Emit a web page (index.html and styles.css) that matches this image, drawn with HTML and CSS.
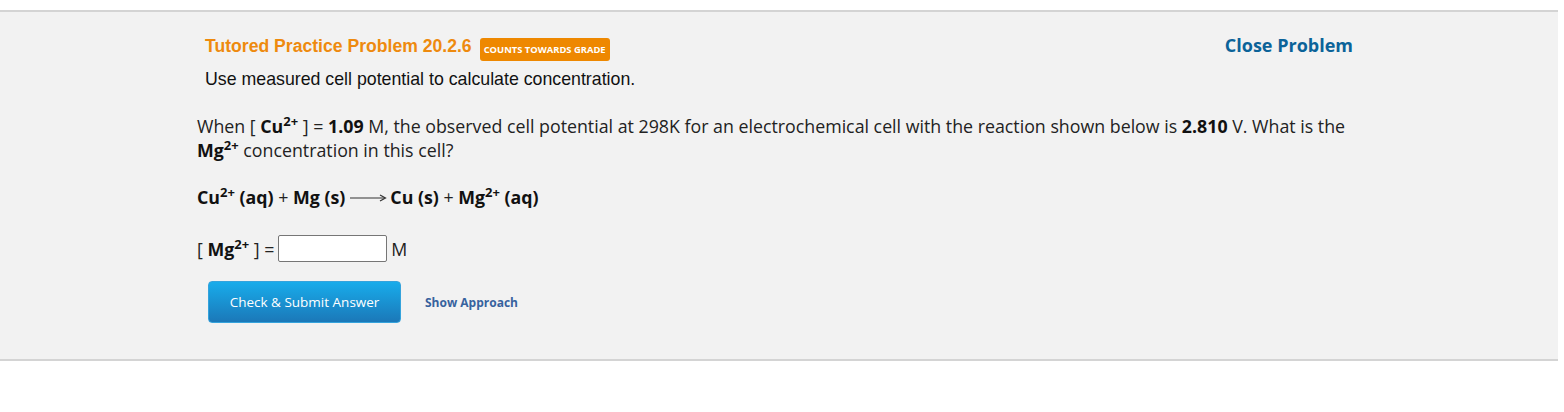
FILE: index.html
```html
<!DOCTYPE html>
<html>
<head>
<meta charset="utf-8">
<link rel="stylesheet" href="styles.css">
</head>
<body>
<div class="panel">
  <div class="header">
    <div class="title-wrap">
      <span class="title">Tutored Practice Problem 20.2.6</span>
      <span class="badge">COUNTS TOWARDS GRADE</span>
    </div>
    <a class="close">Close Problem</a>
  </div>
  <div class="subtitle">Use measured cell potential to calculate concentration.</div>
  <div class="question">
    <p class="prompt">When [ <b>Cu<sup>2+</sup></b> ] = <b>1.09</b> M, the observed cell potential at 298K for an electrochemical cell with the reaction shown below is <b>2.810</b> V. What is the <b>Mg<sup>2+</sup></b> concentration in this cell?</p>
    <p class="equation"><b>Cu<sup>2+</sup> (aq)</b> + <b>Mg (s)</b><svg class="arrow" width="38" height="10" viewBox="0 0 38 10"><line x1="1" y1="5" x2="36" y2="5" stroke="#333" stroke-width="1.2"/><path d="M31 2 L36.5 5 L31 8" fill="none" stroke="#333" stroke-width="1.2"/></svg><b>Cu (s)</b> + <b>Mg<sup>2+</sup> (aq)</b></p>
    <div class="answer-row">
      <span>[ <b>Mg<sup>2+</sup></b> ] =</span>
      <input class="answer" type="text">
      <span>M</span>
    </div>
    <div class="actions">
      <button class="submit">Check &amp; Submit Answer</button>
      <a class="approach">Show Approach</a>
    </div>
  </div>
</div>
</body>
</html>
```
FILE: styles.css
```css
html, body {
  margin: 0;
  padding: 0;
  background: #ffffff;
}
body {
  padding-top: 10px;
}
.panel {
  width: 1558px;
  height: 347px;
  box-sizing: content-box;
  background: #f2f2f2;
  border-top: 2px solid #d4d4d4;
  border-bottom: 2px solid #d4d4d4;
}
.header {
  display: flex;
  justify-content: space-between;
  align-items: flex-end;
  padding: 22px 205px 0 205px;
}
.title-wrap {
  display: flex;
  align-items: center;
  gap: 8px;
}
.title {
  font-family: "Liberation Sans", Arial, sans-serif;
  font-weight: bold;
  font-size: 17.6px;
  color: #ee8a0e;
  line-height: 22px;
}
.badge {
  display: inline-block;
  background: #ee8800;
  color: #ffffff;
  font-family: "Open Sans", sans-serif;
  font-weight: bold;
  font-size: 9.4px;
  line-height: 23px;
  padding: 0 4px;
  border-radius: 3px;
  position: relative;
  top: 4px;
}
.close {
  font-family: "Open Sans", sans-serif;
  font-weight: bold;
  font-size: 18px;
  color: #0b6399;
  line-height: 22px;
  position: relative;
  top: -1px;
}
.subtitle {
  padding: 12px 0 0 205px;
  font-family: "Liberation Sans", Arial, sans-serif;
  font-size: 17.75px;
  line-height: 20px;
  color: #111111;
}
.question {
  padding-left: 197px;
  font-family: "Open Sans", sans-serif;
  font-size: 17.8px;
  color: #222222;
}
.prompt {
  margin: 25px 0 0 0;
  line-height: 24px;
  width: 1170px;
}
sup {
  font-size: 13px;
  line-height: 0;
  vertical-align: 7px;
}
b {
  font-weight: bold;
  color: #111111;
}
.equation {
  margin: 23px 0 0 0;
  line-height: 24px;
}
.arrow {
  margin: 0 3px 0 4px;
  vertical-align: 1px;
}
.answer-row {
  margin-top: 26px;
  display: flex;
  align-items: center;
  gap: 4px;
  height: 27px;
}
.answer {
  width: 109px;
  height: 27px;
  box-sizing: border-box;
  border: 1px solid #767676;
  border-radius: 2px;
  background: #ffffff;
  margin: 0;
  padding: 0 4px;
}
.actions {
  margin-top: 19px;
  padding-left: 11px;
  display: flex;
  align-items: center;
  gap: 24px;
}
.submit {
  width: 193px;
  height: 42px;
  border: 1px solid #35a3dc;
  border-radius: 4px;
  background: linear-gradient(#18aceb, #1b78b8);
  color: #ffffff;
  font-family: "Open Sans", sans-serif;
  font-size: 13.5px;
  padding: 0;
}
.approach {
  font-family: "Open Sans", sans-serif;
  font-weight: bold;
  font-size: 12px;
  color: #37629e;
}
```
